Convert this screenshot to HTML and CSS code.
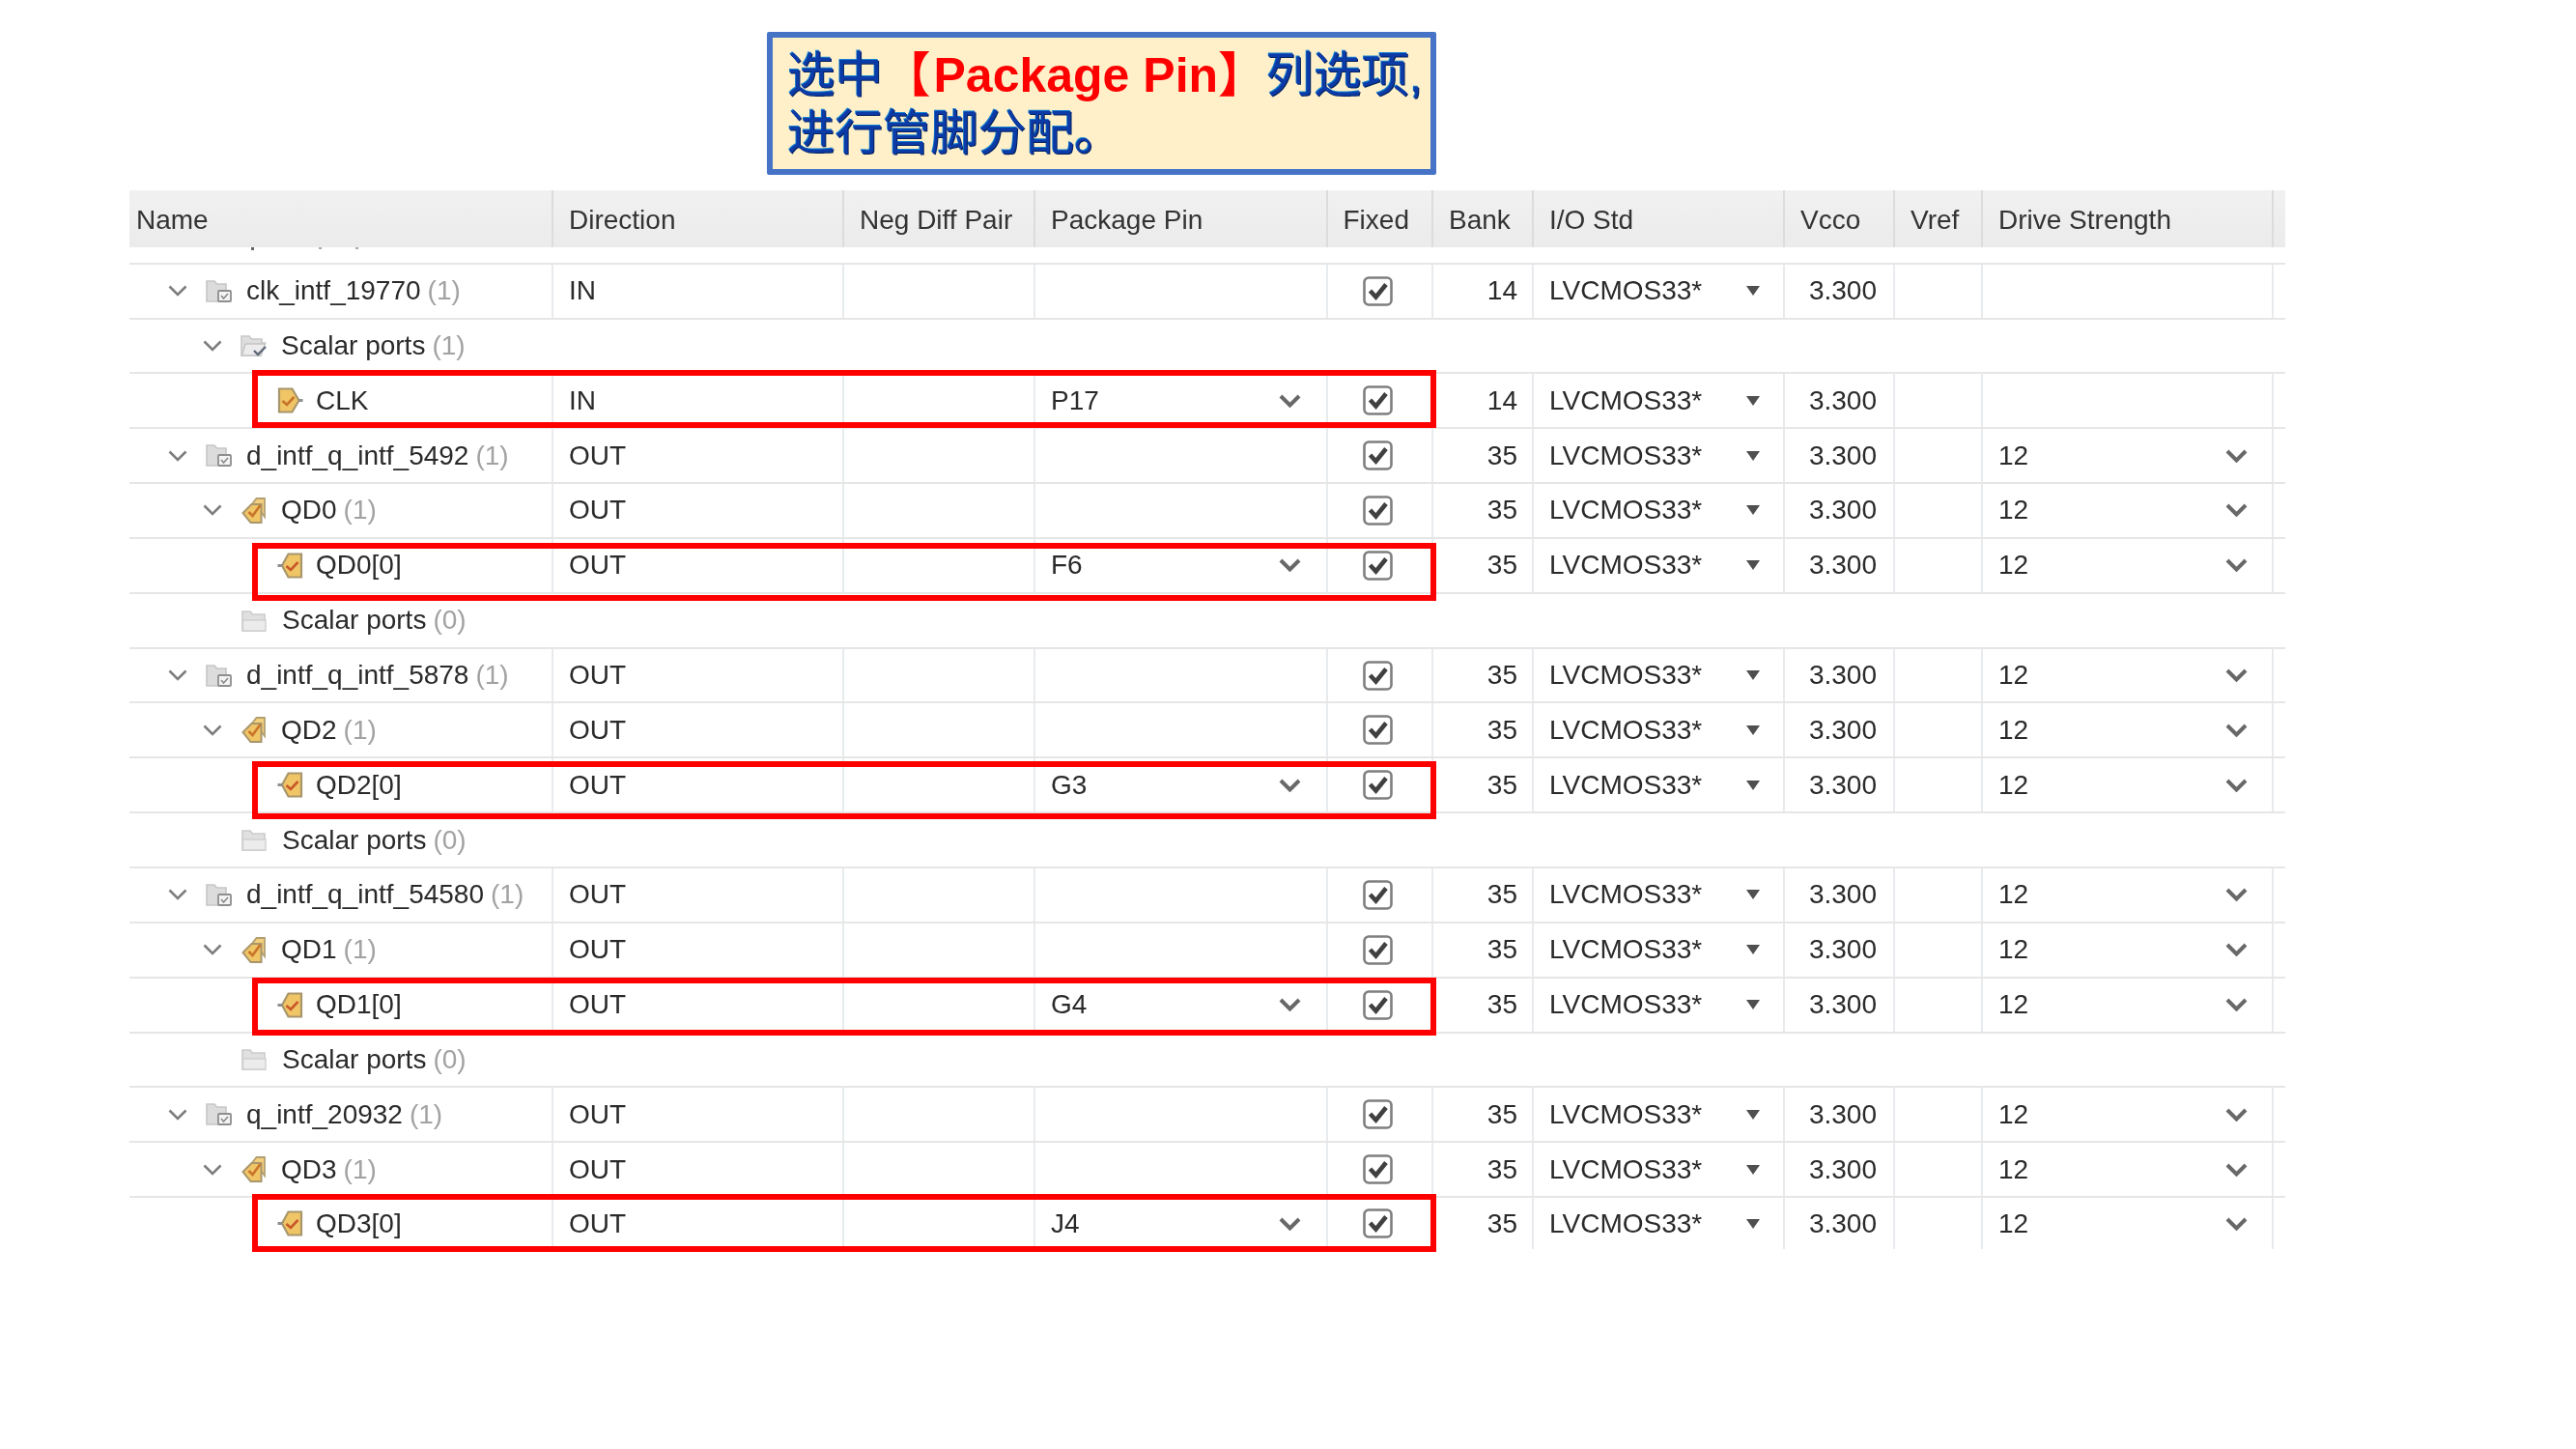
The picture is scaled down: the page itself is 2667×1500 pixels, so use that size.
FILE: index.html
```html
<!DOCTYPE html>
<html lang="zh">
<head>
<meta charset="utf-8">
<title>Package Pin</title>
<link rel="stylesheet" href="styles.css">
</head>
<body>
<svg class="defs" xmlns="http://www.w3.org/2000/svg">
  <symbol id="chev" viewBox="0 0 20 12"><path d="M1.5 1.5 L10 10 L18.5 1.5" fill="none" stroke="#7d7d7d" stroke-width="2.6"/></symbol>
  <symbol id="chev-s" viewBox="0 0 23 14"><path d="M2 2 L11.5 11.5 L21 2" fill="none" stroke="#686868" stroke-width="4"/></symbol>
  <symbol id="tri" viewBox="0 0 14 10"><path d="M0 0 H14 L7 10 Z" fill="#4f4f4f"/></symbol>
  <symbol id="box" viewBox="0 0 31 31"><rect x="1.5" y="1.5" width="28" height="28" rx="4.5" fill="#fff" stroke="#7f7f7f" stroke-width="2.6"/><path d="M7.5 15 L13.5 21.5 L24 8.5" fill="none" stroke="#404040" stroke-width="4.6"/></symbol>
  <symbol id="group" viewBox="0 0 27 27"><path d="M1 24 V3 H9 L11.5 6 H21 V24 Z" fill="#dcdcdc" stroke="#c6c6c6" stroke-width="1.6"/><rect x="13" y="13" width="13" height="11" rx="1" fill="#f4f4f4" stroke="#8e8e8e" stroke-width="1.8"/><path d="M16 18 L18.5 21 L23 16" fill="none" stroke="#8a8a8a" stroke-width="1.6"/></symbol>
  <symbol id="scalar" viewBox="0 0 27 27"><path d="M1 24 V4 H9 L11.5 7 H22 V11 H25.5 L21 24 Z" fill="#dedede" stroke="#c8c8c8" stroke-width="1.6"/><path d="M1.5 24 L5 12 H25.5 L21 24 Z" fill="#ececec" stroke="#c4c4c4" stroke-width="1.4"/><path d="M14 19 L18 23 L26 15" fill="none" stroke="#5d6878" stroke-width="2.4"/></symbol>
  <symbol id="empty" viewBox="0 0 27 27"><path d="M1 24 V4 H9 L11.5 7 H24 V24 Z" fill="#e0e0e0" stroke="#cbcbcb" stroke-width="1.6"/><path d="M1.5 24 V13 H25 V24 Z" fill="#ececec" stroke="#cfcfcf" stroke-width="1.4"/></symbol>
  <symbol id="port-in" viewBox="0 0 26 27"><path d="M1.5 1.5 H15 L22 13.5 L15 25.5 H1.5 Z" fill="#f0c566" stroke="#a8966c" stroke-width="2.2"/><path d="M22 13.5 H26" stroke="#8f8f8f" stroke-width="3"/><path d="M5 14 L9.5 18 L17 10" fill="none" stroke="#c8742a" stroke-width="2.6"/></symbol>
  <symbol id="port-out" viewBox="0 0 26 27"><path d="M24.5 1.5 H11 L4.5 13.5 L11 25.5 H24.5 Z" fill="#f0c566" stroke="#a8966c" stroke-width="2.2"/><path d="M0 13.5 H5" stroke="#8f8f8f" stroke-width="3"/><path d="M9 14 L13.5 18 L21 10" fill="none" stroke="#c8582a" stroke-width="2.6"/></symbol>
  <symbol id="bus-out" viewBox="0 0 26 27"><path d="M24.5 1 H16 L9 10 V14 H20 L24.5 20 Z" fill="#f4cf7c" stroke="#b3a072" stroke-width="1.8"/><path d="M21 7 H11 L2 16 L10 26 H21 Z" fill="#f0c566" stroke="#a8966c" stroke-width="2"/><path d="M8 15 L12 19 L20 8" fill="none" stroke="#c8742a" stroke-width="2.6"/></symbol>
</svg>

<main class="page">
  <div class="callout">选中<span class="hot cjk-hot">【</span><span class="hot latin-hot">Package Pin</span><span class="hot cjk-hot">】</span>列选项,<br>进行管脚分配。</div>

  <section class="table">
    <div class="row head">
      <div class="c first">Name</div><div class="c">Direction</div><div class="c">Neg Diff Pair</div><div class="c">Package Pin</div><div class="c">Fixed</div><div class="c">Bank</div><div class="c">I/O Std</div><div class="c">Vcco</div><div class="c">Vref</div><div class="c">Drive Strength</div><div class="c"></div>
    </div>
    <div class="stub"><svg class="stub-dots" viewBox="0 0 240 3"><rect x="0" width="3" height="3" fill="#666"/><rect x="70" width="3" height="2" fill="#aaa"/><rect x="108" width="3" height="2" fill="#aaa"/></svg></div>

    <div class="row">
      <div class="c first name lv1"><svg class="chev"><use href="#chev"/></svg><svg class="ico"><use href="#group"/></svg>clk_intf_19770<span class="count">(1)</span></div>
      <div class="c">IN</div><div class="c"></div><div class="c"></div>
      <div class="c mid"><svg class="check"><use href="#box"/></svg></div><div class="c num">14</div>
      <div class="c sel io">LVCMOS33*<svg class="tri"><use href="#tri"/></svg></div><div class="c volt">3.300</div><div class="c"></div><div class="c"></div><div class="c"></div>
    </div>
    <div class="row plain">
      <div class="c first name lv2"><svg class="chev"><use href="#chev"/></svg><svg class="ico"><use href="#scalar"/></svg>Scalar ports<span class="count">(1)</span></div>
    </div>
    <div class="row">
      <div class="c first name lv3"><svg class="ico"><use href="#port-in"/></svg>CLK</div>
      <div class="c">IN</div><div class="c"></div>
      <div class="c sel pin">P17<svg class="chev-s"><use href="#chev-s"/></svg></div>
      <div class="c mid"><svg class="check"><use href="#box"/></svg></div><div class="c num">14</div>
      <div class="c sel io">LVCMOS33*<svg class="tri"><use href="#tri"/></svg></div><div class="c volt">3.300</div><div class="c"></div><div class="c"></div><div class="c"></div>
      <div class="mark mark-a"></div>
    </div>

    <div class="row">
      <div class="c first name lv1"><svg class="chev"><use href="#chev"/></svg><svg class="ico"><use href="#group"/></svg>d_intf_q_intf_5492<span class="count">(1)</span></div>
      <div class="c">OUT</div><div class="c"></div><div class="c"></div>
      <div class="c mid"><svg class="check"><use href="#box"/></svg></div><div class="c num">35</div>
      <div class="c sel io">LVCMOS33*<svg class="tri"><use href="#tri"/></svg></div><div class="c volt">3.300</div><div class="c"></div><div class="c sel drive">12<svg class="chev-s"><use href="#chev-s"/></svg></div><div class="c"></div>
    </div>
    <div class="row">
      <div class="c first name lv2"><svg class="chev"><use href="#chev"/></svg><svg class="ico"><use href="#bus-out"/></svg>QD0<span class="count">(1)</span></div>
      <div class="c">OUT</div><div class="c"></div><div class="c"></div>
      <div class="c mid"><svg class="check"><use href="#box"/></svg></div><div class="c num">35</div>
      <div class="c sel io">LVCMOS33*<svg class="tri"><use href="#tri"/></svg></div><div class="c volt">3.300</div><div class="c"></div><div class="c sel drive">12<svg class="chev-s"><use href="#chev-s"/></svg></div><div class="c"></div>
    </div>
    <div class="row">
      <div class="c first name lv3"><svg class="ico"><use href="#port-out"/></svg>QD0[0]</div>
      <div class="c">OUT</div><div class="c"></div>
      <div class="c sel pin">F6<svg class="chev-s"><use href="#chev-s"/></svg></div>
      <div class="c mid"><svg class="check"><use href="#box"/></svg></div><div class="c num">35</div>
      <div class="c sel io">LVCMOS33*<svg class="tri"><use href="#tri"/></svg></div><div class="c volt">3.300</div><div class="c"></div><div class="c sel drive">12<svg class="chev-s"><use href="#chev-s"/></svg></div><div class="c"></div>
      <div class="mark mark-b"></div>
    </div>
    <div class="row plain">
      <div class="c first name lv2 leaf"><svg class="ico"><use href="#empty"/></svg>Scalar ports<span class="count">(0)</span></div>
    </div>

    <div class="row">
      <div class="c first name lv1"><svg class="chev"><use href="#chev"/></svg><svg class="ico"><use href="#group"/></svg>d_intf_q_intf_5878<span class="count">(1)</span></div>
      <div class="c">OUT</div><div class="c"></div><div class="c"></div>
      <div class="c mid"><svg class="check"><use href="#box"/></svg></div><div class="c num">35</div>
      <div class="c sel io">LVCMOS33*<svg class="tri"><use href="#tri"/></svg></div><div class="c volt">3.300</div><div class="c"></div><div class="c sel drive">12<svg class="chev-s"><use href="#chev-s"/></svg></div><div class="c"></div>
    </div>
    <div class="row">
      <div class="c first name lv2"><svg class="chev"><use href="#chev"/></svg><svg class="ico"><use href="#bus-out"/></svg>QD2<span class="count">(1)</span></div>
      <div class="c">OUT</div><div class="c"></div><div class="c"></div>
      <div class="c mid"><svg class="check"><use href="#box"/></svg></div><div class="c num">35</div>
      <div class="c sel io">LVCMOS33*<svg class="tri"><use href="#tri"/></svg></div><div class="c volt">3.300</div><div class="c"></div><div class="c sel drive">12<svg class="chev-s"><use href="#chev-s"/></svg></div><div class="c"></div>
    </div>
    <div class="row">
      <div class="c first name lv3"><svg class="ico"><use href="#port-out"/></svg>QD2[0]</div>
      <div class="c">OUT</div><div class="c"></div>
      <div class="c sel pin">G3<svg class="chev-s"><use href="#chev-s"/></svg></div>
      <div class="c mid"><svg class="check"><use href="#box"/></svg></div><div class="c num">35</div>
      <div class="c sel io">LVCMOS33*<svg class="tri"><use href="#tri"/></svg></div><div class="c volt">3.300</div><div class="c"></div><div class="c sel drive">12<svg class="chev-s"><use href="#chev-s"/></svg></div><div class="c"></div>
      <div class="mark mark-c"></div>
    </div>
    <div class="row plain">
      <div class="c first name lv2 leaf"><svg class="ico"><use href="#empty"/></svg>Scalar ports<span class="count">(0)</span></div>
    </div>

    <div class="row">
      <div class="c first name lv1"><svg class="chev"><use href="#chev"/></svg><svg class="ico"><use href="#group"/></svg>d_intf_q_intf_54580<span class="count">(1)</span></div>
      <div class="c">OUT</div><div class="c"></div><div class="c"></div>
      <div class="c mid"><svg class="check"><use href="#box"/></svg></div><div class="c num">35</div>
      <div class="c sel io">LVCMOS33*<svg class="tri"><use href="#tri"/></svg></div><div class="c volt">3.300</div><div class="c"></div><div class="c sel drive">12<svg class="chev-s"><use href="#chev-s"/></svg></div><div class="c"></div>
    </div>
    <div class="row">
      <div class="c first name lv2"><svg class="chev"><use href="#chev"/></svg><svg class="ico"><use href="#bus-out"/></svg>QD1<span class="count">(1)</span></div>
      <div class="c">OUT</div><div class="c"></div><div class="c"></div>
      <div class="c mid"><svg class="check"><use href="#box"/></svg></div><div class="c num">35</div>
      <div class="c sel io">LVCMOS33*<svg class="tri"><use href="#tri"/></svg></div><div class="c volt">3.300</div><div class="c"></div><div class="c sel drive">12<svg class="chev-s"><use href="#chev-s"/></svg></div><div class="c"></div>
    </div>
    <div class="row">
      <div class="c first name lv3"><svg class="ico"><use href="#port-out"/></svg>QD1[0]</div>
      <div class="c">OUT</div><div class="c"></div>
      <div class="c sel pin">G4<svg class="chev-s"><use href="#chev-s"/></svg></div>
      <div class="c mid"><svg class="check"><use href="#box"/></svg></div><div class="c num">35</div>
      <div class="c sel io">LVCMOS33*<svg class="tri"><use href="#tri"/></svg></div><div class="c volt">3.300</div><div class="c"></div><div class="c sel drive">12<svg class="chev-s"><use href="#chev-s"/></svg></div><div class="c"></div>
      <div class="mark mark-d"></div>
    </div>
    <div class="row plain">
      <div class="c first name lv2 leaf"><svg class="ico"><use href="#empty"/></svg>Scalar ports<span class="count">(0)</span></div>
    </div>

    <div class="row">
      <div class="c first name lv1"><svg class="chev"><use href="#chev"/></svg><svg class="ico"><use href="#group"/></svg>q_intf_20932<span class="count">(1)</span></div>
      <div class="c">OUT</div><div class="c"></div><div class="c"></div>
      <div class="c mid"><svg class="check"><use href="#box"/></svg></div><div class="c num">35</div>
      <div class="c sel io">LVCMOS33*<svg class="tri"><use href="#tri"/></svg></div><div class="c volt">3.300</div><div class="c"></div><div class="c sel drive">12<svg class="chev-s"><use href="#chev-s"/></svg></div><div class="c"></div>
    </div>
    <div class="row">
      <div class="c first name lv2"><svg class="chev"><use href="#chev"/></svg><svg class="ico"><use href="#bus-out"/></svg>QD3<span class="count">(1)</span></div>
      <div class="c">OUT</div><div class="c"></div><div class="c"></div>
      <div class="c mid"><svg class="check"><use href="#box"/></svg></div><div class="c num">35</div>
      <div class="c sel io">LVCMOS33*<svg class="tri"><use href="#tri"/></svg></div><div class="c volt">3.300</div><div class="c"></div><div class="c sel drive">12<svg class="chev-s"><use href="#chev-s"/></svg></div><div class="c"></div>
    </div>
    <div class="row last">
      <div class="c first name lv3"><svg class="ico"><use href="#port-out"/></svg>QD3[0]</div>
      <div class="c">OUT</div><div class="c"></div>
      <div class="c sel pin">J4<svg class="chev-s"><use href="#chev-s"/></svg></div>
      <div class="c mid"><svg class="check"><use href="#box"/></svg></div><div class="c num">35</div>
      <div class="c sel io">LVCMOS33*<svg class="tri"><use href="#tri"/></svg></div><div class="c volt">3.300</div><div class="c"></div><div class="c sel drive">12<svg class="chev-s"><use href="#chev-s"/></svg></div><div class="c"></div>
      <div class="mark mark-a"></div>
    </div>
  </section>
</main>
</body>
</html>
```

FILE: styles.css
```css
* { box-sizing: border-box; }
html, body { margin: 0; background: #fff; }
body { width: 2667px; height: 1500px; overflow: hidden; }
.defs { display: none; }

.page { padding: 33px 0 0 134px; }

.callout {
  margin-left: 660px;
  width: 693px;
  height: 148px;
  padding: 5px 0 0 15px;
  background: #fff0c9;
  border: 6.5px solid #4673c6;
  border-radius: 2px;
  font: 400 49.5px/60px "Liberation Sans", "Noto Sans CJK SC", sans-serif;
  color: #0c3aa6;
  text-shadow: 1px 1px 0 #04215f, -0.8px -0.8px 0 #1786d2;
  white-space: nowrap;
  filter: blur(0.5px);
}
.hot { color: #ff0000; font-weight: 700; text-shadow: none; }
.cjk-hot { font-family: "Noto Sans CJK SC", sans-serif; }
.latin-hot { font-size: 50px; margin-left: 3px; }

.table {
  margin-top: 16px;
  width: 2232px;
  font: 28px/1 "Liberation Sans", sans-serif;
  color: #2a2a2a;
}
.row {
  position: relative;
  display: grid;
  grid-template-columns: 437px 301px 198px 302.5px 109.5px 104px 260px 114px 91px 301px 14px;
  height: 56.85px;
  border-bottom: 2px solid #e6e6e6;
}
.row.last { height: 53px; border-bottom: 0; }
.row.plain { grid-template-columns: 1fr; }

.c {
  display: flex;
  align-items: center;
  min-width: 0;
  padding-left: 16px;
  border-left: 2px solid #e8ebee;
  white-space: nowrap;
  filter: blur(0.55px);
}
.c.first { border-left: 0; padding-left: 7px; }

.head {
  height: 59px;
  border-bottom: 0;
  background: linear-gradient(#f1f1f1, #ebebeb);
  color: #333;
}
.head .c { border-left-color: #dcdcdc; padding-top: 2px; }

.stub {
  height: 17.7px;
  padding-left: 126px;
  border-bottom: 2px solid #e6e6e6;
}
.stub-dots { display: block; width: 240px; height: 3px; }

.name.lv1 { padding-left: 40px; }
.name.lv2 { padding-left: 76px; }
.name.lv2.leaf { padding-left: 116px; }
.name.lv3 { padding-left: 153px; }
.chev { width: 20px; height: 12px; margin-right: 19px; flex: none; }
.ico { width: 27px; height: 27px; margin-right: 15px; flex: none; }
.lv3 .ico { margin-right: 13px; }
.count { margin-left: 7px; color: #a2a2a2; }

.mid { justify-content: center; padding: 0 3px 0 0; }
.check { width: 31px; height: 31px; }
.num { justify-content: flex-end; padding: 0 15px 0 0; }
.volt { justify-content: flex-end; padding: 0 17px 0 0; }

.sel { justify-content: space-between; }
.io { padding-right: 24px; }
.pin { padding-right: 26px; }
.drive { padding-right: 25px; }
.tri { width: 14px; height: 10px; }
.chev-s { width: 23px; height: 14px; }

.mark {
  position: absolute;
  left: 127px;
  width: 1226px;
  height: 60px;
  border: 6.3px solid #ff0000;
}
.mark-a { top: -4px; }
.mark-b { top: 4px; }
.mark-c { top: 3px; }
.mark-d { top: -1px; }
```
